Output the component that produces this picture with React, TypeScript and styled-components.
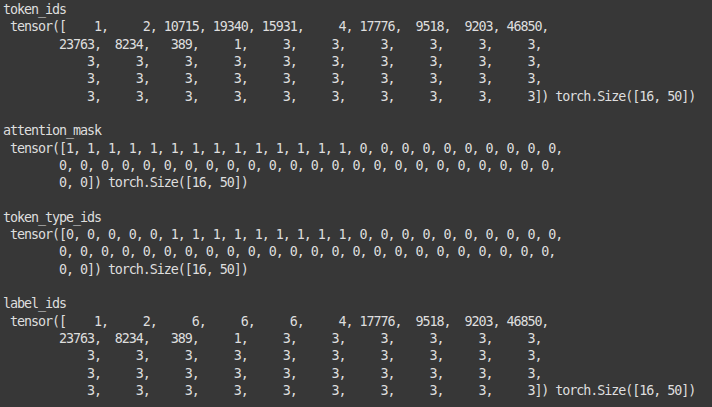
import React from "react";
import styled, { createGlobalStyle } from "styled-components";

const Global = createGlobalStyle`
  html, body { margin: 0; padding: 0; background: #373737; }
`;

const LINE = 17.32;

const Screen = styled.div`
  width: 712px;
  height: 407px;
  overflow: hidden;
  box-sizing: border-box;
  padding: 1px 0 0 3px;
  background: #373737;
  color: #dedede;
  font-family: "DejaVu Sans Mono", "Liberation Mono", monospace;
  font-size: 13.4px;
  letter-spacing: -1.07px;
  line-height: ${LINE}px;
  display: flex;
  flex-direction: column;
  gap: ${LINE}px;
`;

const Block = styled.section`
  display: flex;
  flex-direction: column;
`;

const Label = styled.div`
  white-space: pre;
`;

const Value = styled.pre`
  margin: 0;
  font: inherit;
  white-space: pre;
`;

function formatTensor(vals: number[], perLine: number): string {
  const w = Math.max(...vals.map((v) => String(v).length));
  const items = vals.map((v) => String(v).padStart(w));
  const lines: string[] = [];
  for (let i = 0; i < items.length; i += perLine) {
    lines.push(items.slice(i, i + perLine).join(", "));
  }
  return lines
    .map(
      (l, i) =>
        (i === 0 ? " tensor([" : "        ") +
        l +
        (i === lines.length - 1 ? "]) torch.Size([16, 50])" : ",")
    )
    .join("\n");
}

const pad = (n: number, v: number) => Array(n).fill(v);

const tokenIds = [1, 2, 10715, 19340, 15931, 4, 17776, 9518, 9203, 46850, 23763, 8234, 389, 1, ...pad(36, 3)];
const labelIds = [1, 2, 6, 6, 6, 4, 17776, 9518, 9203, 46850, 23763, 8234, 389, 1, ...pad(36, 3)];
const attention = [...pad(14, 1), ...pad(36, 0)];
const tokenType = [...pad(5, 0), ...pad(9, 1), ...pad(36, 0)];

const blocks = [
  { name: "token_ids", text: formatTensor(tokenIds, 10) },
  { name: "attention_mask", text: formatTensor(attention, 24) },
  { name: "token_type_ids", text: formatTensor(tokenType, 24) },
  { name: "label_ids", text: formatTensor(labelIds, 10) },
];

export default function App() {
  return (
    <>
      <Global />
      <Screen>
        {blocks.map((b) => (
          <Block key={b.name}>
            <Label>{b.name}</Label>
            <Value>{b.text}</Value>
          </Block>
        ))}
      </Screen>
    </>
  );
}
